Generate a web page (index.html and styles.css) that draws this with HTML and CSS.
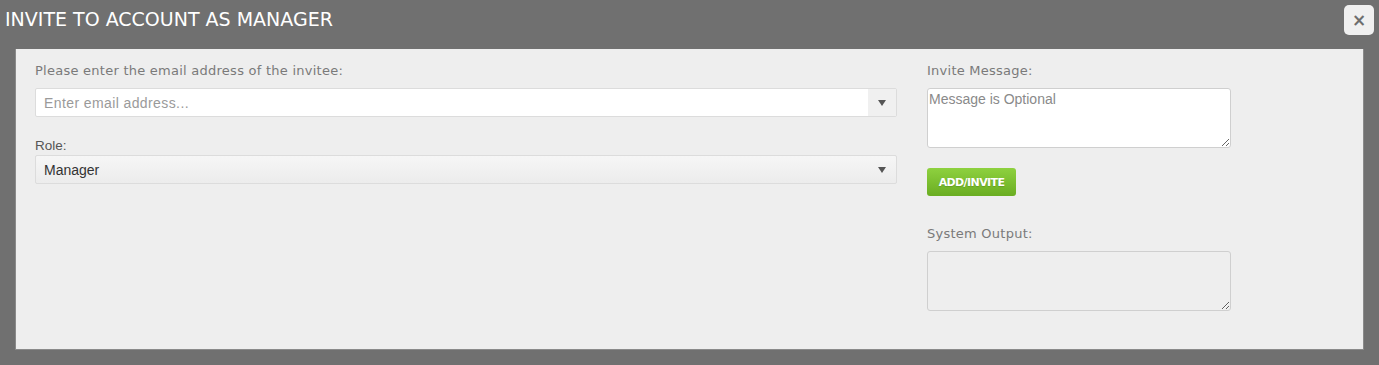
FILE: index.html
```html
<!DOCTYPE html>
<html>
<head>
    <link rel="stylesheet" href="styles.css">
</head>
<body>
    <div class="modal">
        <div class="modal-header">
            <h1>INVITE TO ACCOUNT AS MANAGER</h1>
            <button type="button" class="close-btn">&times;</button>
        </div>
        <div class="modal-body">
            <div class="left-col">
                <label class="field-label" for="inviteEmail">Please enter the email address of the invitee:</label>
                <div class="combo">
                    <input type="text" id="inviteEmail" placeholder="Enter email address...">
                    <span class="combo-arrow"><span class="caret"></span></span>
                </div>

                <label class="role-label" for="role">Role:</label>
                <div class="select-box">
                    <span class="select-value">Manager</span>
                    <span class="combo-arrow"><span class="caret"></span></span>
                </div>
            </div>

            <div class="right-col">
                <label class="field-label" for="inviteMessage">Invite Message:</label>
                <textarea id="inviteMessage" class="message" placeholder="Message is Optional"></textarea>

                <div>
                    <button type="button" class="invite-btn">ADD/INVITE</button>
                </div>

                <label class="field-label output-label" for="systemOutput">System Output:</label>
                <textarea id="systemOutput" class="output" readonly></textarea>
            </div>
        </div>
    </div>
</body>
</html>
```

FILE: styles.css
```css
body {
    margin: 0;
    padding: 0;
    background-color: #707070;
    font-family: 'Liberation Sans', Arial, sans-serif;
}
.modal {
    width: 1379px;
    height: 365px;
}
.modal-header {
    display: flex;
    justify-content: space-between;
    align-items: flex-start;
    height: 49px;
    padding-left: 5px;
    box-sizing: border-box;
}
h1 {
    margin: 8px 0 0 0;
    font-family: 'DejaVu Sans', sans-serif;
    font-weight: normal;
    font-size: 19px;
    line-height: 22px;
    letter-spacing: 0;
    color: #ffffff;
}
.close-btn {
    width: 30px;
    height: 30px;
    margin: 5px 5px 0 0;
    padding: 0;
    border: none;
    border-radius: 5px;
    background-color: #f0f0f0;
    color: #6e6e6e;
    font-family: 'DejaVu Sans', sans-serif;
    font-size: 17px;
    font-weight: bold;
    line-height: 30px;
    cursor: pointer;
}
.modal-body {
    display: grid;
    grid-template-columns: 862px 304px;
    column-gap: 30px;
    width: 1349px;
    height: 301px;
    margin-left: 15px;
    padding: 13px 19px 0 19px;
    box-sizing: border-box;
    background-color: #eeeeee;
    border: 1px solid #8a8a8a;
    border-top: none;
}
.left-col,
.right-col {
    display: flex;
    flex-direction: column;
}
.field-label {
    display: block;
    height: 18px;
    line-height: 18px;
    margin-bottom: 8px;
    font-family: 'DejaVu Sans', sans-serif;
    font-size: 13px;
    letter-spacing: 0.25px;
    color: #7a7a7a;
}
.role-label {
    display: block;
    height: 18px;
    line-height: 18px;
    margin-top: 20px;
    font-size: 13.5px;
    color: #555;
}
.combo {
    display: flex;
    height: 29px;
    border: 1px solid #dcdcdc;
    border-radius: 2px;
    box-sizing: border-box;
    background: #ffffff;
}
.combo input {
    flex: 1;
    border: none;
    outline: none;
    padding: 0 8px;
    font-family: 'Liberation Sans', Arial, sans-serif;
    font-size: 14px;
    color: #333;
    background: transparent;
}
.combo input::placeholder {
    color: #9a9a9a;
    letter-spacing: 0.4px;
}
.combo .combo-arrow {
    background-color: #f0f0f0;
}
.combo-arrow {
    display: flex;
    align-items: center;
    justify-content: center;
    width: 28px;
}
.caret {
    width: 0;
    height: 0;
    border-left: 4px solid transparent;
    border-right: 4px solid transparent;
    border-top: 6px solid #555;
}
.select-box {
    display: flex;
    align-items: center;
    height: 29px;
    border: 1px solid #dcdcdc;
    border-radius: 2px;
    box-sizing: border-box;
    background: linear-gradient(#f6f6f6, #ececec);
}
.select-value {
    flex: 1;
    padding-left: 8px;
    font-size: 14px;
    color: #333;
}
.select-box .combo-arrow {
    height: 100%;
}
textarea {
    display: block;
    width: 304px;
    height: 60px;
    margin: 0;
    padding: 2px 0 0 1px;
    box-sizing: border-box;
    border: 1px solid #cfcfcf;
    border-radius: 3px;
    font-family: 'Liberation Sans', Arial, sans-serif;
    font-size: 14px;
    color: #333;
    resize: vertical;
}
textarea::placeholder {
    color: #8a8a8a;
}
.message {
    background: #ffffff;
}
.output {
    background: #eeeeee;
}
.invite-btn {
    display: inline-block;
    width: 89px;
    height: 28px;
    margin-top: 20px;
    padding: 0;
    border: none;
    border-radius: 3px;
    background: linear-gradient(#8ed13f, #6aad22);
    color: #ffffff;
    font-family: 'DejaVu Sans', sans-serif;
    font-size: 11px;
    font-weight: bold;
    letter-spacing: -0.6px;
    text-shadow: 0 1px 1px rgba(0, 0, 0, 0.15);
    cursor: pointer;
}
.output-label {
    margin-top: 29px;
}
```
